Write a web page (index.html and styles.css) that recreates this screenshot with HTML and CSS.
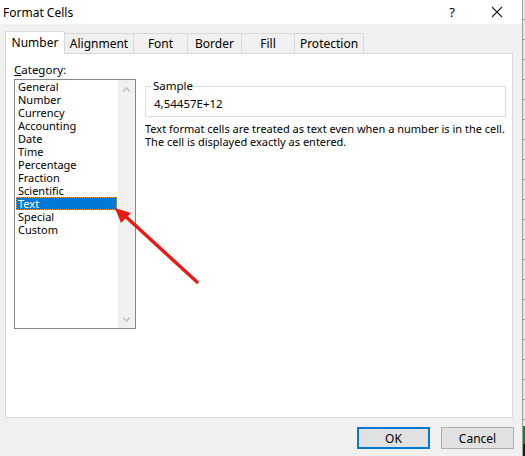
FILE: index.html
```html
<!DOCTYPE html>
<html lang="en">
<head>
    <meta charset="UTF-8">
    <title>Format Cells</title>
    <link rel="stylesheet" href="styles.css">
</head>
<body>
    <div class="dialog">
        <div class="title-bar">
            <span class="title">Format Cells</span>
            <span class="help">?</span>
            <span class="close">
                <svg viewBox="0 0 12 12" width="12" height="12">
                    <path d="M1 1 L11 11 M11 1 L1 11" stroke="#222" stroke-width="1.1" fill="none"/>
                </svg>
            </span>
        </div>
        <div class="dialog-body">
            <div class="tabs">
                <div class="tab active">Number</div>
                <div class="tab tab-alignment">Alignment</div>
                <div class="tab tab-font">Font</div>
                <div class="tab tab-border">Border</div>
                <div class="tab tab-fill">Fill</div>
                <div class="tab tab-protection">Protection</div>
            </div>
            <div class="panel">
                <div class="category">
                    <div class="label"><u>C</u>ategory:</div>
                    <div class="listbox">
                        <ul class="items">
                            <li>General</li>
                            <li>Number</li>
                            <li>Currency</li>
                            <li>Accounting</li>
                            <li>Date</li>
                            <li>Time</li>
                            <li>Percentage</li>
                            <li>Fraction</li>
                            <li>Scientific</li>
                            <li class="selected">Text</li>
                            <li>Special</li>
                            <li>Custom</li>
                        </ul>
                        <div class="scrollbar">
                            <svg class="arrow-up" viewBox="0 0 9 5" width="9" height="5">
                                <path d="M1 4.5 L4.5 1 L8 4.5" stroke="#c4c4c4" stroke-width="1.6" fill="none"/>
                            </svg>
                            <svg class="arrow-down" viewBox="0 0 9 5" width="9" height="5">
                                <path d="M1 0.5 L4.5 4 L8 0.5" stroke="#c4c4c4" stroke-width="1.6" fill="none"/>
                            </svg>
                        </div>
                    </div>
                </div>
                <div class="details">
                    <div class="sample">
                        <span class="sample-legend">Sample</span>
                        <div class="sample-value">4,54457E+12</div>
                    </div>
                    <p class="description">Text format cells are treated as text even when a number is in the cell.<br>The cell is displayed exactly as entered.</p>
                </div>
            </div>
            <div class="buttons">
                <button class="btn btn-default">OK</button>
                <button class="btn">Cancel</button>
            </div>
        </div>
        <svg class="pointer" width="525" height="456" viewBox="0 0 525 456">
            <line x1="197" y1="282" x2="124" y2="215" stroke="#e81b14" stroke-width="3.4" stroke-linecap="round"/>
            <polygon points="115,208 131,213 121,223" fill="#e81b14"/>
        </svg>
    </div>
    <div class="sheet-edge">
        <div class="grid-lines"></div>
        <div class="status-green"></div>
        <div class="status-dark"></div>
    </div>
</body>
</html>
```

FILE: styles.css
```css
* {
    margin: 0;
    padding: 0;
    box-sizing: border-box;
}

html, body {
    width: 525px;
    height: 456px;
    overflow: hidden;
}

body {
    display: flex;
    font-family: 'Noto Sans', 'Liberation Sans', sans-serif;
    font-size: 11.5px;
    color: #000;
    background: #f0f0f0;
}

.dialog {
    width: 522px;
    height: 456px;
    display: flex;
    flex-direction: column;
    position: relative;
}

/* window chrome */
.title-bar {
    height: 24px;
    background: #fff;
    display: flex;
    align-items: center;
    padding-left: 3px;
}

.title {
    flex: 1;
    font-size: 12px;
    color: #000;
}

.help {
    width: 20px;
    text-align: center;
    margin-right: 25px;
    font-size: 13px;
}

.close {
    width: 20px;
    margin-right: 15px;
    display: flex;
    justify-content: center;
}

.dialog-body {
    flex: 1;
    background: #f0f0f0;
    padding: 7px 9px 0 5px;
    display: flex;
    flex-direction: column;
}

/* tab strip */
.tabs {
    display: flex;
    align-items: flex-end;
    height: 22px;
    position: relative;
    z-index: 1;
}

.tab {
    height: 20px;
    border: 1px solid #d9d9d9;
    border-bottom: none;
    border-left: none;
    background: #f0f0f0;
    display: flex;
    align-items: center;
    justify-content: center;
    font-size: 12px;
}

.tab.active {
    width: 60px;
    background: #fff;
    border-left: 1px solid #d9d9d9;
    margin-bottom: -1px;
    height: 23px;
    padding-bottom: 2px;
}

.tab-alignment { width: 69px; }
.tab-font { width: 54px; }
.tab-border { width: 54px; }
.tab-fill { width: 53px; }
.tab-protection { width: 69px; }

.panel {
    height: 365px;
    background: #fff;
    border: 1px solid #d9d9d9;
    display: flex;
    padding: 8px 0 0 8px;
    gap: 9px;
}

/* category list */
.category {
    width: 122px;
}

.label {
    height: 17px;
    line-height: 16px;
}

.listbox {
    height: 250px;
    border: 1px solid #828790;
    display: flex;
}

.items {
    flex: 1;
    list-style: none;
    font-size: 11px;
}

.items li {
    height: 13px;
    line-height: 13px;
    margin: 0 1px;
    padding-left: 2px;
}

.items li.selected {
    background: #0078d7;
    color: #fff;
    outline: 1px dotted #f0a030;
    outline-offset: -1px;
}

.scrollbar {
    width: 17px;
    background: #f0f0f0;
    display: flex;
    flex-direction: column;
    justify-content: space-between;
    align-items: center;
    padding: 7px 0 6px;
}

/* sample and explanation */
.details {
    width: 361px;
}

.sample {
    margin-top: 24px;
    height: 31px;
    border: 1px solid #dcdcdc;
    position: relative;
    padding: 9px 0 0 8px;
}

.sample-legend {
    position: absolute;
    top: -9px;
    left: 5px;
    padding: 0 2px;
    background: #fff;
    line-height: 16px;
}

.sample-value {
    line-height: 16px;
}

.description {
    margin-top: 5px;
    line-height: 13px;
    font-size: 11px;
    white-space: nowrap;
}

/* dialog buttons */
.buttons {
    display: flex;
    justify-content: flex-end;
    gap: 11px;
    padding-top: 9px;
    margin-right: -1px;
}

.btn {
    width: 73px;
    height: 22px;
    background: #e1e1e1;
    border: 1px solid #adadad;
    font-family: 'Noto Sans', 'Liberation Sans', sans-serif;
    font-size: 12px;
    color: #000;
}

.btn-default {
    border: 2px solid #0078d7;
}

.pointer {
    position: absolute;
    top: 0;
    left: 0;
    pointer-events: none;
}

/* sliver of the worksheet behind the dialog */
.sheet-edge {
    flex: 1;
    display: flex;
    flex-direction: column;
    border-left: 1px solid #a0a0a0;
}

.grid-lines {
    flex: 1;
    background: repeating-linear-gradient(
        to bottom,
        #e8e8e8 0,
        #e8e8e8 19px,
        #9a9a9a 19px,
        #9a9a9a 20px
    );
}

.status-green {
    height: 18px;
    background: #217346;
}

.status-dark {
    height: 12px;
    background: #1a1a1a;
}
```
